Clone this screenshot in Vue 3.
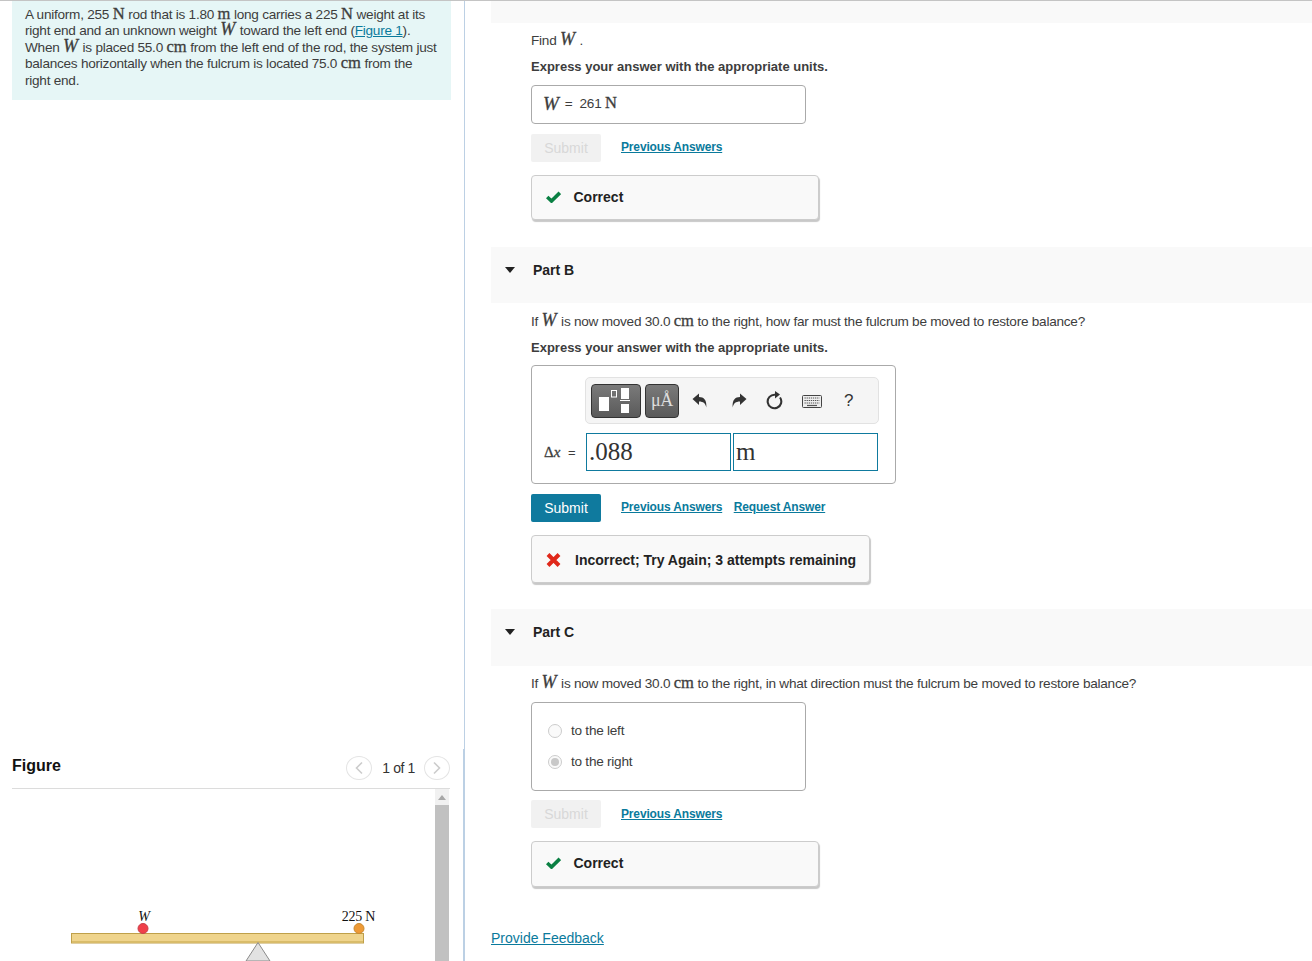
<template>
  <div class="page">
    <aside class="left">
      <div class="intro">
        A uniform, 255 <span class="mr">N</span> rod that is 1.80 <span class="mr">m</span> long carries a 225 <span class="mr">N</span> weight at its right end and an unknown weight <span class="mi">W</span> toward the left end (<a class="flink">Figure 1</a>). When <span class="mi">W</span> is placed 55.0 <span class="mr">cm</span> from the left end of the rod, the system just balances horizontally when the fulcrum is located 75.0 <span class="mr">cm</span> from the right end.
      </div>
      <div class="fig-head">
        <h2>Figure</h2>
        <div class="pager">
          <span class="circle"><svg width="12" height="14" viewBox="0 0 12 14"><path d="M9 1.500 3.500 7 9 12.500" fill="none" stroke="#ccc" stroke-width="1.600"/></svg></span>
          <span class="count">1 of 1</span>
          <span class="circle"><svg width="12" height="14" viewBox="0 0 12 14"><path d="M3 1.500 8.500 7 3 12.500" fill="none" stroke="#ccc" stroke-width="1.600"/></svg></span>
        </div>
      </div>
      <div class="fig-body">
        <svg class="diagram" width="423" height="172" viewBox="0 0 423 172">
          <text x="132" y="132" text-anchor="middle" font-family="Liberation Serif" font-style="italic" font-size="14" fill="#111">W</text>
          <text x="346.500" y="132" text-anchor="middle" font-family="Liberation Serif" font-size="14" fill="#111">225 N</text>
          <rect x="59.500" y="144.500" width="292" height="9.500" fill="#efd48c" stroke="#bfa04a"/>
          <rect x="60" y="152" width="291" height="2" fill="#d9bc6a"/>
          <circle cx="131" cy="139.500" r="5" fill="#f0404a" stroke="#c8404a"/>
          <circle cx="347" cy="139.500" r="5" fill="#ee9a36" stroke="#c98a30"/>
          <path d="M234 172 246 153.500 258 172Z" fill="#e2e2e2" stroke="#8a8a8a"/>
        </svg>
        <div class="scrollbar"><span class="arrow"></span><span class="thumb"></span></div>
      </div>
    </aside>

    <main class="right">
      <div class="bar-top"></div>
      <p class="q find">Find <span class="mi">W</span> .</p>
      <p class="hint h1">Express your answer with the appropriate units.</p>
      <div class="answer"><span class="mi">W</span><span class="eq">=</span><span class="val">261 <span class="mr">N</span></span></div>
      <div class="actions a1">
        <button class="btn off">Submit</button>
        <a class="link">Previous Answers</a>
      </div>
      <div class="fb ok w288">
        <svg width="15" height="12" viewBox="0 0 15 12"><path d="M1.200 6 5.500 10 13.800 1.800" fill="none" stroke="#0a8043" stroke-width="3.600"/></svg>
        <span>Correct</span>
      </div>

      <div class="part-head b"><span class="tri"></span><b>Part B</b></div>
      <p class="q qb">If <span class="mi">W</span> is now moved 30.0 <span class="mr">cm</span> to the right, how far must the fulcrum be moved to restore balance?</p>
      <p class="hint h2">Express your answer with the appropriate units.</p>
      <div class="editor">
        <div class="toolbar">
          <span class="tool t1">
            <svg width="46" height="30" viewBox="0 0 46 30"><rect x="6" y="11" width="10" height="14" fill="#fff"/><rect x="18.500" y="4.500" width="5" height="6.500" fill="none" stroke="#fff"/><rect x="28" y="2" width="8" height="11" fill="#fff"/><rect x="27" y="14" width="10" height="1" fill="#fff"/><rect x="28" y="18" width="8" height="9" fill="#fff"/></svg>
          </span>
          <span class="tool t2">μÅ</span>
          <svg class="ic i1" width="16" height="16" viewBox="0 0 16 16"><path d="M.500 6 7 .5v3.600c4.800 0 8 3 7.300 10.400C13.500 10.500 11.500 8.500 7 8.500V12Z" fill="#333"/></svg>
          <svg class="ic i2" width="16" height="16" viewBox="0 0 16 16"><path d="M15.500 6 9 .5v3.600c-4.800 0-8 3-7.300 10.400C2.500 10.500 4.500 8.500 9 8.500V12Z" fill="#333"/></svg>
          <svg class="ic i3" width="18" height="19" viewBox="0 0 18 19"><path d="M14 6.500A6.800 6.800 0 1 1 9 3.700" fill="none" stroke="#333" stroke-width="2.100"/><path d="M9 0 14 3.600 9 7.500Z" fill="#333"/></svg>
          <svg class="ic i4" width="20" height="13" viewBox="0 0 20 13"><rect x=".5" y=".5" width="19" height="12" rx="1" fill="#eee" stroke="#444"/><path d="M2.500 3h15M2.500 5.500h15M2.500 8h15" stroke="#555" stroke-width="1.200" stroke-dasharray="1.300 .8"/><path d="M5 10.500h10" stroke="#555" stroke-width="1.200"/></svg>
          <span class="help">?</span>
        </div>
        <div class="inputs">
          <span class="dx"><span class="mr">Δ</span><span class="mi small">x</span> =</span>
          <span class="field">.088</span>
          <span class="field f2">m</span>
        </div>
      </div>
      <div class="actions a2">
        <button class="btn on">Submit</button>
        <a class="link">Previous Answers</a>
        <a class="link l2">Request Answer</a>
      </div>
      <div class="fb bad">
        <svg width="15" height="14" viewBox="0 0 15 14"><path d="M2 1.500 13 12.500M13 1.500 2 12.500" stroke="#e0281a" stroke-width="4"/></svg>
        <span>Incorrect; Try Again; 3 attempts remaining</span>
      </div>

      <div class="part-head c"><span class="tri"></span><b>Part C</b></div>
      <p class="q qc">If <span class="mi">W</span> is now moved 30.0 <span class="mr">cm</span> to the right, in what direction must the fulcrum be moved to restore balance?</p>
      <div class="choices">
        <label class="choice"><span class="radio"></span>to the left</label>
        <label class="choice"><span class="radio sel"></span>to the right</label>
      </div>
      <div class="actions a3">
        <button class="btn off">Submit</button>
        <a class="link">Previous Answers</a>
      </div>
      <div class="fb ok w288 last">
        <svg width="15" height="12" viewBox="0 0 15 12"><path d="M1.200 6 5.500 10 13.800 1.800" fill="none" stroke="#0a8043" stroke-width="3.600"/></svg>
        <span>Correct</span>
      </div>
      <a class="feedback">Provide Feedback</a>
    </main>
  </div>
</template>

<script setup>
</script>

<style>
html, body { margin: 0; background: #fff; overflow: hidden; }
</style>

<style scoped>
.page {
  display: flex;
  width: 1312px;
  height: 961px;
  overflow: hidden;
  border-top: 1px solid #c4c4c4;
  box-sizing: border-box;
  font-family: "Liberation Sans", Arial, sans-serif;
  font-size: 13.600px;
  letter-spacing: -.25px;
  color: #3d3d3d;
}
.left {
  width: 464px;
  flex: none;
  box-sizing: border-box;
  padding-left: 12px;
  display: flex;
  flex-direction: column;
  position: relative;
}
.left::after {
  content: "";
  position: absolute;
  right: 0;
  top: 748px;
  bottom: 0;
  width: 1px;
  background: #bcd0e4;
}
.intro {
  width: 439px;
  height: 99px;
  box-sizing: border-box;
  background: #e6f6f6;
  padding: 6px 11px 0 13px;
  line-height: 16.400px;
}
.mr { font-family: "Liberation Serif", serif; font-size: 16.500px; letter-spacing: 0; -webkit-text-stroke: .3px; line-height: 1px; }
.mi { font-family: "Liberation Serif", serif; font-style: italic; font-size: 18px; letter-spacing: 0; -webkit-text-stroke: .3px; line-height: 1px; margin-right: 1px; }
.flink, .link, .feedback { color: #0a7a9c; text-decoration: underline; }
.fig-head {
  margin-top: 645px;
  width: 438px;
  height: 44px;
  box-sizing: border-box;
  border-bottom: 1px solid #dcdcdc;
  display: flex;
  justify-content: space-between;
  padding-top: 11px;
}
.fig-head h2 { margin: 0; font-size: 16px; line-height: 20px; color: #111; font-weight: 700; letter-spacing: 0; }
.pager { display: flex; align-items: flex-start; }
.circle {
  width: 24px; height: 22px; border: 1px solid #e4e4e4; border-radius: 50%;
  display: flex; align-items: center; justify-content: center;
}
.count { margin: 4px 9px 0 10px; line-height: 16px; color: #333; font-size: 14px; letter-spacing: -.4px; }
.fig-body { display: flex; width: 438px; flex: 1; position: relative; }
.diagram { flex: none; display: block; }
.scrollbar { width: 14px; background: #f1f1f1; display: flex; flex-direction: column; align-items: center; }
.arrow { width: 0; height: 0; margin: 6px 0 5px; border: 4px solid transparent; border-top: 0; border-bottom: 5px solid #a8a8a8; }
.thumb { flex: 1; width: 100%; background: #c1c1c1; }

.right {
  flex: 1;
  border-left: 1px solid #bcd0e4;
  padding-left: 26px;
  display: flex;
  flex-direction: column;
  align-items: flex-start;
  min-width: 0;
}
.bar-top { width: 821px; height: 22px; background: #f9f9f9; flex: none; }
p { margin: 0; }
.q { margin-left: 40px; line-height: 18px; white-space: nowrap; }
.find { margin-top: 9px; }
.hint { margin-left: 40px; font-weight: 700; line-height: 18px; white-space: nowrap; font-size: 13px; letter-spacing: 0; }
.h1 { margin-top: 8px; }
.h2 { margin-top: 8px; }
.answer {
  margin: 9px 0 0 40px;
  width: 275px; height: 39px; box-sizing: border-box;
  border: 1px solid #aaa; border-radius: 4px;
  display: flex; align-items: center; gap: 5px; padding-left: 11px;
  padding-bottom: 2px;
}
.answer .mi { font-size: 19px; margin-right: 0; }
.eq { margin: 0 1px; }
.val { margin-left: 1px; }
.actions { margin-left: 40px; display: flex; align-items: flex-start; letter-spacing: 0; }
.a1 { margin-top: 10px; }
.a2 { margin-top: 10px; }
.a3 { margin-top: 9px; }
.btn {
  width: 70px; height: 28px; border: 0; border-radius: 2px; padding: 0;
  font: 14px "Liberation Sans", Arial, sans-serif; margin-right: 20px;
}
.off { background: #f1f1f1; color: #d8d8d8; }
.on { background: #0f7a9e; color: #fff; }
.link { font-size: 12px; font-weight: 700; line-height: 14px; margin-top: 6px; letter-spacing: -.15px; }
.a3 .link { margin-top: 7px; }
.l2 { margin-left: 11.500px; }
.fb {
  margin: 13px 0 0 40px;
  box-sizing: border-box;
  border: 1px solid #ccc; border-radius: 4px;
  background: #f9f9f9;
  box-shadow: 1px 2px 1px #c8c8c8;
  display: flex; align-items: center;
  font-weight: 700; color: #222; font-size: 14px; letter-spacing: 0;
}
.w288 { width: 288px; height: 45px; padding: 0 0 2px 14px; gap: 12.500px; }
.bad { width: 339px; height: 48px; padding: 2px 0 0 14px; gap: 14px; }
.part-head {
  width: 821px; height: 56px; background: #f9f9f9; flex: none;
  display: flex; align-items: flex-start; padding: 15px 0 0 14px; box-sizing: border-box;
  color: #222; letter-spacing: 0;
}
.part-head b { font-size: 14px; line-height: 16px; margin-left: 18px; }
.b { margin-top: 27px; }
.c { margin-top: 26px; height: 57px; }
.tri { width: 0; height: 0; border: 5.500px solid transparent; border-top: 6px solid #222; border-bottom: 0; margin-top: 5px; }
.qb { margin-top: 10px; }
.qc { margin-top: 9px; }
.editor {
  margin: 8px 0 0 40px;
  width: 365px; height: 119px; box-sizing: border-box;
  border: 1px solid #aaa; border-radius: 4px;
  position: relative;
}
.toolbar {
  position: absolute; left: 53px; top: 11px; width: 294px; height: 47px;
  box-sizing: border-box; background: #f5f5f5; border: 1px solid #e2e2e2; border-radius: 5px;
  display: flex; align-items: center;
}
.tool {
  height: 34px; box-sizing: border-box;
  background: linear-gradient(#7a7a7a, #5a5a5a);
  border: 1px solid #333; border-radius: 4px;
  display: flex; align-items: center; justify-content: center;
  color: #ddd; font-family: "Liberation Serif", serif; font-size: 18px;
}
.t1 { width: 50px; margin-left: 5px; }
.t2 { width: 34px; margin-left: 4px; }
.ic { flex: none; }
.i1 { margin-left: 13px; }
.i2 { margin-left: 23px; }
.i3 { margin-left: 19px; }
.i4 { margin-left: 18px; margin-top: 2px; }
.help { margin-left: 22px; font-size: 17px; color: #333; }
.inputs { position: absolute; left: 0; top: 67px; display: flex; align-items: center; padding-left: 12px; }
.dx { width: 42px; font-size: 13px; white-space: nowrap; letter-spacing: 0; }
.dx .mr { font-size: 15px; }
.dx .small { font-size: 15px; margin-right: 4px; }
.field {
  width: 145px; height: 38px; box-sizing: border-box;
  border: 1px solid #0f7a9e; padding-left: 2px;
  font: 25px/36px "Liberation Serif", serif; color: #333; letter-spacing: 0;
}
.f2 { margin-left: 2px; }
.choices {
  margin: 9px 0 0 40px;
  width: 275px; height: 89px; box-sizing: border-box;
  border: 1px solid #aaa; border-radius: 4px;
  padding-top: 12px;
}
.choice { display: flex; align-items: center; height: 31px; padding-left: 16px; gap: 9px; }
.radio { width: 12px; height: 12px; border: 1px solid #ccc; border-radius: 50%; background: #fafafa; display: block; position: relative; }
.sel::after { content: ""; position: absolute; left: 2px; top: 2px; width: 8px; height: 8px; border-radius: 50%; background: #c8c8c8; }
.last { height: 46px; }
.feedback { font-size: 14px; margin-top: 42px; line-height: 18px; letter-spacing: 0; }
</style>
